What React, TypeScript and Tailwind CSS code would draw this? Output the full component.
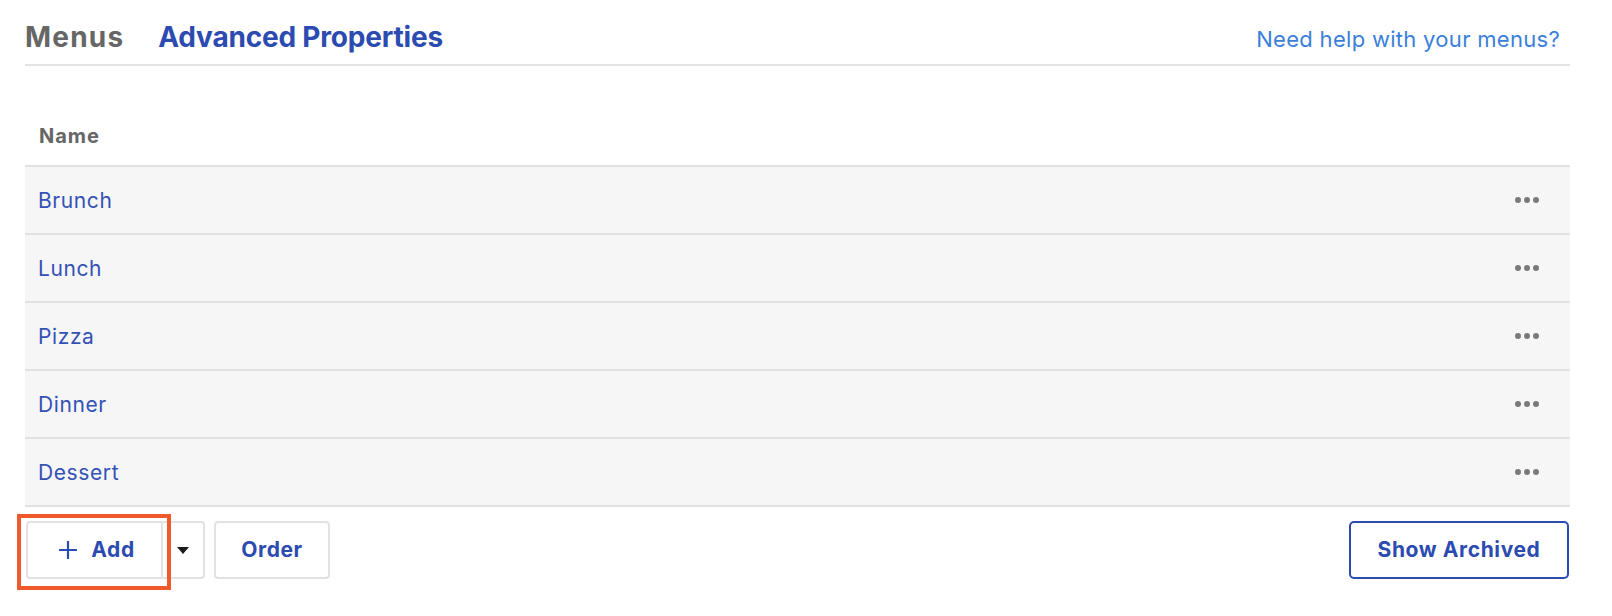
import React from "react";

const rows = ["Brunch", "Lunch", "Pizza", "Dinner", "Dessert"];

function Dots() {
  return (
    <div className="flex items-center gap-[3px]">
      <span className="block h-[6px] w-[6px] rounded-full bg-[#7a7a7a]" />
      <span className="block h-[6px] w-[6px] rounded-full bg-[#7a7a7a]" />
      <span className="block h-[6px] w-[6px] rounded-full bg-[#7a7a7a]" />
    </div>
  );
}

export default function App() {
  return (
    <div
      className="min-h-[616px] w-[1612px] bg-white"
      style={{ fontFamily: "Inter, 'Liberation Sans', sans-serif" }}
    >
      <div className="ml-[25px] w-[1545px]">
        {/* Header */}
        <div className="flex items-baseline justify-between border-b-2 border-[#e4e4e4] pt-[23px] pb-[11px]">
          <div className="flex items-baseline gap-[34px]">
            <span className="text-[28px] font-bold leading-[28px] tracking-[1.2px] text-[#666666]">
              Menus
            </span>
            <span className="text-[28px] font-bold leading-[28px] tracking-[-0.2px] text-[#2c4bb1]">
              Advanced Properties
            </span>
          </div>
          <span className="mr-[10px] text-[22px] leading-[28px] tracking-[0.3px] text-[#3b7fdb]">
            Need help with your menus?
          </span>
        </div>

        {/* Table header */}
        <div className="border-b-2 border-[#e2e2e2] pl-[14px] pt-[60px] pb-[19px]">
          <span className="block text-[20px] font-bold leading-[20px] tracking-[1px] text-[#666666]">
            Name
          </span>
        </div>

        {/* Rows */}
        {rows.map((r) => (
          <div
            key={r}
            className="flex h-[68px] items-center justify-between border-b-2 border-[#e2e2e2] bg-[#f6f6f6] pl-[13px] pr-[31px]"
          >
            <span className="mt-[1px] text-[21px] leading-[21px] tracking-[0.6px] text-[#3451b6]">
              {r}
            </span>
            <Dots />
          </div>
        ))}

        {/* Footer */}
        <div className="mt-[14px] flex items-start justify-between">
          <div className="ml-px flex items-center gap-[9px]">
            <div className="flex">
              <div className="relative">
                <button className="flex h-[58px] w-[137px] items-center justify-center gap-[13px] rounded-l-[4px] border-2 border-[#e2e2e2] bg-white pl-[4px] text-[21px] font-bold tracking-[0.6px] text-[#2c4bb1]">
                  <svg width="20" height="20" viewBox="0 0 20 20" className="block">
                    <path d="M10 1v18M1 10h18" stroke="#2c4bb1" strokeWidth="2.2" fill="none" />
                  </svg>
                  <span>Add</span>
                </button>
                <span className="pointer-events-none absolute -left-[9px] -top-[7px] block h-[76px] w-[154px] border-4 border-[#ee5a2b]" />
              </div>
              <button className="flex h-[58px] w-[42px] items-center justify-center rounded-r-[4px] border-2 border-l-0 border-[#e2e2e2] bg-white">
                <svg width="12" height="7" viewBox="0 0 12 7" className="block">
                  <path d="M0 0h12L6 7z" fill="#1a1a1a" />
                </svg>
              </button>
            </div>
            <button className="flex h-[58px] w-[116px] items-center justify-center rounded-[4px] border-2 border-[#e2e2e2] bg-white text-[21px] font-bold tracking-[0.6px] text-[#2c4bb1]">
              Order
            </button>
          </div>
          <button className="mr-px flex h-[58px] w-[220px] items-center justify-center rounded-[5px] border-2 border-[#2c4bb1] bg-white text-[21px] font-bold tracking-[0.6px] text-[#2c4bb1]">
            Show Archived
          </button>
        </div>
      </div>
    </div>
  );
}
